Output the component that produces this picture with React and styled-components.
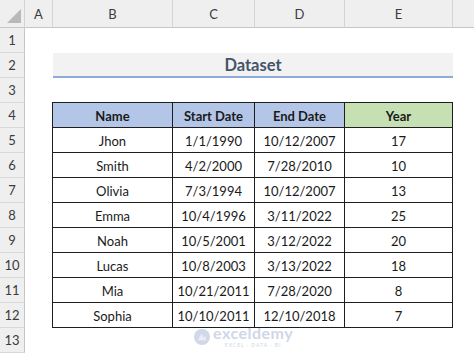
import React from "react";
import styled, { createGlobalStyle } from "styled-components";

const GlobalStyle = createGlobalStyle`
  html, body {
    margin: 0;
    padding: 0;
    background: #ffffff;
    overflow: hidden;
  }
  body {
    font-family: "Lato", "Liberation Sans", sans-serif;
  }
`;

const columns = ["A", "B", "C", "D", "E", ""];
const rowNumbers = Array.from({ length: 13 }, (_, i) => i + 1);

const data = [
  ["Jhon", "1/1/1990", "10/12/2007", "17"],
  ["Smith", "4/2/2000", "7/28/2010", "10"],
  ["Olivia", "7/3/1994", "10/12/2007", "13"],
  ["Emma", "10/4/1996", "3/11/2022", "25"],
  ["Noah", "10/5/2001", "3/12/2022", "20"],
  ["Lucas", "10/8/2003", "3/13/2022", "18"],
  ["Mia", "10/21/2011", "7/28/2020", "8"],
  ["Sophia", "10/10/2011", "12/10/2018", "7"],
];

const headings = ["Name", "Start Date", "End Date", "Year"];

const App = () => {
  return (
    <>
      <GlobalStyle />
      <Sheet>
        <Corner>
          <svg width="14" height="14" viewBox="0 0 14 14">
            <polygon points="14,0 14,14 0,14" fill="#b9b9b9" />
          </svg>
        </Corner>
        {columns.map((c, i) => (
          <ColHead key={i} $last={i === columns.length - 1}>
            {c}
          </ColHead>
        ))}
        {rowNumbers.map((n) => (
          <RowHead key={n} style={{ gridRow: n + 1 }}>
            {n}
          </RowHead>
        ))}
        <Title>Dataset</Title>
        <Table>
          {headings.map((h, i) => (
            <HeadCell key={h} $green={i === 3}>
              {h}
            </HeadCell>
          ))}
          {data.map((row) =>
            row.map((v, i) => <Cell key={row[0] + i}>{v}</Cell>)
          )}
        </Table>
        <Watermark>
          <svg width="16" height="16" viewBox="0 0 17 17">
            <circle cx="8.5" cy="8.5" r="8.5" fill="#cdd5e6" />
            <path d="M4 12 L8 5 L10 9 L12 7 L13 12 Z" fill="#e8ecf4" />
          </svg>
          <MarkText>
            <MarkName>exceldemy</MarkName>
            <MarkSub>EXCEL · DATA · BI</MarkSub>
          </MarkText>
        </Watermark>
      </Sheet>
    </>
  );
};

const Sheet = styled.div`
  position: relative;
  display: grid;
  grid-template-columns: 25px 28px 120px 82px 90px 108px 1fr;
  grid-template-rows: 28px repeat(13, 25px);
  width: 474px;
  height: 354px;
  overflow: hidden;
  background: #ffffff;
`;

const Corner = styled.div`
  grid-column: 1;
  grid-row: 1;
  display: flex;
  align-items: flex-end;
  justify-content: flex-end;
  padding: 0 3px 4px 0;
  background: #efefef;
  border-right: 1px solid #d4d4d4;
  border-bottom: 1px solid #c6c6c6;
`;

const ColHead = styled.div`
  display: flex;
  align-items: center;
  justify-content: center;
  background: #efefef;
  border-right: ${(p) => (p.$last ? "none" : "1px solid #d4d4d4")};
  border-bottom: 1px solid #c6c6c6;
  font-family: "Lato", "Liberation Sans", sans-serif;
  font-size: 13px;
  color: #3b3b3b;
`;

const RowHead = styled.div`
  grid-column: 1;
  display: flex;
  align-items: center;
  justify-content: center;
  background: #efefef;
  border-right: 1px solid #c6c6c6;
  border-bottom: 1px solid #d8d8d8;
  font-family: "Lato", "Liberation Sans", sans-serif;
  font-size: 13px;
  color: #3b3b3b;
`;

const Title = styled.div`
  grid-column: 3 / 7;
  grid-row: 3;
  display: flex;
  align-items: center;
  justify-content: center;
  background: #f2f2f2;
  border-bottom: 2px solid #8eaadb;
  font-family: "Lato", "Liberation Sans", sans-serif;
  font-size: 16.5px;
  font-weight: 700;
  color: #44546a;
`;

const Table = styled.div`
  grid-column: 3 / 7;
  grid-row: 5 / 14;
  display: grid;
  grid-template-columns: 120px 82px 90px 108px;
  grid-auto-rows: 25px;
  box-sizing: border-box;
  border-left: 1px solid #1e1e1e;
  border-top: 1px solid #1e1e1e;
  margin-left: -1px;
  margin-top: -1px;
`;

const Cell = styled.div`
  display: flex;
  align-items: center;
  justify-content: center;
  padding-top: 1px;
  border-right: 1px solid #1e1e1e;
  border-bottom: 1px solid #1e1e1e;
  font-family: "Lato", "Liberation Sans", sans-serif;
  font-size: 13px;
  color: #1a1a1a;
`;

const HeadCell = styled(Cell)`
  background: ${(p) => (p.$green ? "#c6e0b4" : "#b4c6e7")};
  font-weight: 700;
`;

const Watermark = styled.div`
  position: absolute;
  left: 194px;
  top: 325px;
  display: flex;
  align-items: center;
  gap: 3px;
  opacity: 0.9;
`;

const MarkText = styled.div`
  display: flex;
  flex-direction: column;
  align-items: center;
  gap: 1px;
`;

const MarkName = styled.span`
  font-family: "Lato", "Liberation Sans", sans-serif;
  font-size: 16px;
  font-weight: 700;
  line-height: 16px;
  letter-spacing: 0.5px;
  color: #cbd3e5;
`;

const MarkSub = styled.span`
  font-family: "Lato", "Liberation Sans", sans-serif;
  font-size: 5px;
  line-height: 6px;
  letter-spacing: 1px;
  color: #ccd2de;
`;

export default App;
